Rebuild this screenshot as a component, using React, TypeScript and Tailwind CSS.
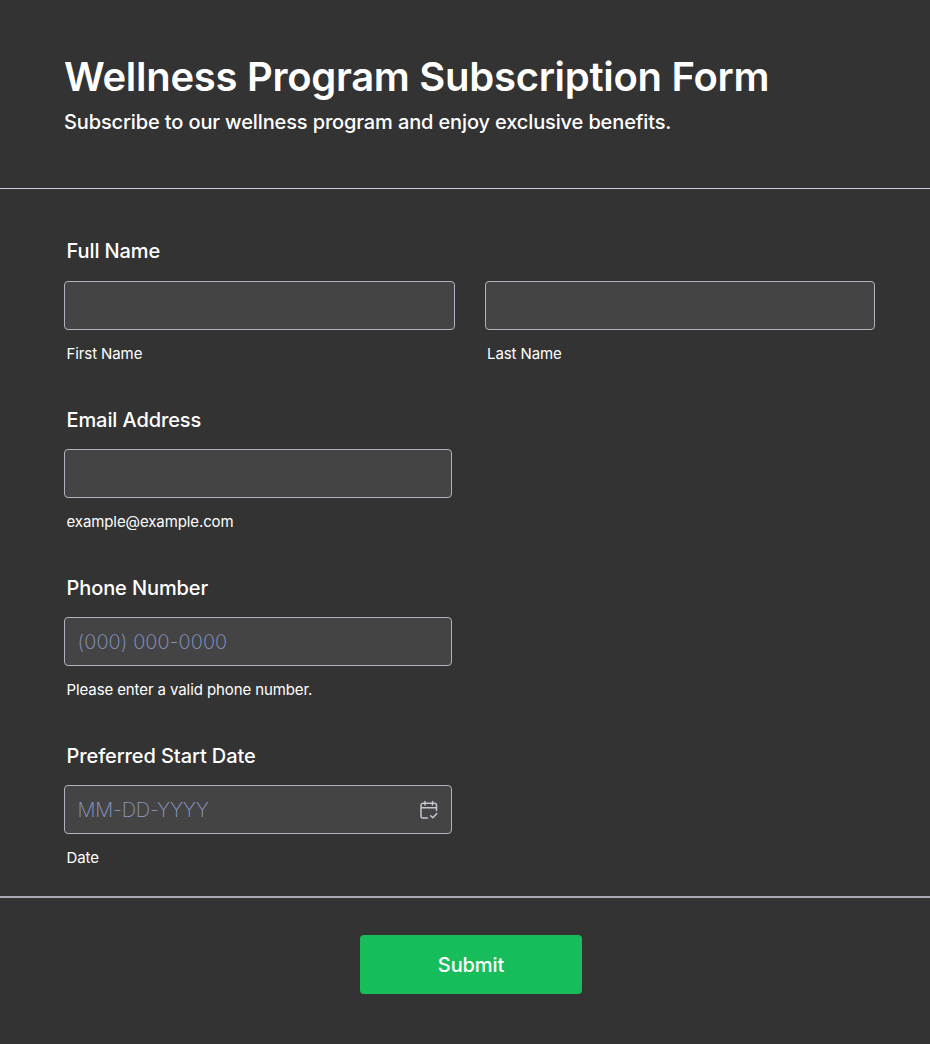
import React, { useState } from 'react';
import { clsx } from 'clsx';

const inputClass =
  'h-[49px] w-full rounded-[4px] border border-[#b0b3be] bg-[#444444] px-[12.5px] text-[20px] font-extralight text-white outline-none placeholder:text-[#8c9ac4] placeholder:opacity-100 focus:border-white';

interface FieldProps {
  label: string;
  children: React.ReactNode;
  className?: string;
}

function Field({ label, children, className = 'pt-px' }: FieldProps) {
  return (
    <div className={clsx('flex h-[168px] flex-col', className)}>
      <div className="h-[41px] pl-[2.5px] text-[20px] leading-6 font-medium tracking-[-0.1px]">{label}</div>
      {children}
    </div>
  );
}

interface TextInputProps {
  id: string;
  hint: string;
  type?: string;
  placeholder?: string;
  className?: string;
  inputClassName?: string;
  icon?: React.ReactNode;
}

function TextInput({ id, hint, type = 'text', placeholder, className, inputClassName, icon }: TextInputProps) {
  const [value, setValue] = useState('');

  return (
    <div className={clsx('flex flex-col', className)}>
      <div className="relative flex">
        <input
          id={id}
          type={type}
          value={value}
          placeholder={placeholder}
          onChange={(e) => setValue(e.target.value)}
          className={clsx(inputClass, inputClassName)}
        />
        {icon}
      </div>
      <label htmlFor={id} className="mt-[15px] pl-[2.5px] text-[15px] leading-[18px] tracking-[-0.1px]">
        {hint}
      </label>
    </div>
  );
}

function CalendarIcon() {
  return (
    <svg
      viewBox="0 0 20 20"
      className="absolute top-[15px] right-[13px] h-5 w-5"
      fill="none"
      stroke="#c3c5d2"
      strokeWidth="1.5"
      strokeLinecap="round"
      strokeLinejoin="round"
    >
      <path d="M8.5 18H4a2 2 0 0 1-2-2V5.2a2 2 0 0 1 2-2h11.5a2 2 0 0 1 2 2v5.3M2 7.8h15.5M6 1.5v3.4M13.5 1.5v3.4" />
      <path d="m11.7 15.7 2.1 2.1 4-4.3" />
    </svg>
  );
}

export default function App() {
  return (
    <form
      className="min-h-[1044px] w-full bg-[#333333] font-['Inter',sans-serif] text-white"
      onSubmit={(e) => e.preventDefault()}
    >
      {/* Header */}
      <header className="h-[189px] border-b border-[#d0d1dc] px-16 pt-[52px]">
        <h1 className="text-[40px] leading-[50px] font-semibold tracking-[-0.29px]">
          Wellness Program Subscription Form
        </h1>
        <p className="mt-2 text-[20px] leading-6 font-medium tracking-[-0.13px]">
          Subscribe to our wellness program and enjoy exclusive benefits.
        </p>
      </header>

      {/* Fields */}
      <div className="h-[709px] border-b-2 border-[#a7aab3] pt-[50px] pr-[55px] pl-16">
        <Field label="Full Name" className="[&>div:first-child]:h-[42px]">
          <div className="flex gap-[30px]">
            <TextInput id="first" hint="First Name" className="flex-1" />
            <TextInput id="last" hint="Last Name" className="flex-1" />
          </div>
        </Field>
        <Field label="Email Address">
          <TextInput id="email" type="email" hint="example@example.com" className="w-[388px]" />
        </Field>
        <Field label="Phone Number">
          <TextInput
            id="phone"
            type="tel"
            placeholder="(000) 000-0000"
            hint="Please enter a valid phone number."
            className="w-[388px]"
            inputClassName="tracking-[0.08px]"
          />
        </Field>
        <Field label="Preferred Start Date">
          <TextInput
            id="date"
            placeholder="MM-DD-YYYY"
            hint="Date"
            className="w-[388px]"
            inputClassName="tracking-[-0.2px]"
            icon={<CalendarIcon />}
          />
        </Field>
      </div>

      {/* Submit */}
      <div className="flex justify-center pt-[37px] pl-3">
        <button
          type="submit"
          className="h-[59px] w-[222px] rounded-[4px] bg-[#18bd5b] text-[20px] font-medium tracking-[-0.1px] hover:bg-[#16a951]"
        >
          Submit
        </button>
      </div>
    </form>
  );
}
